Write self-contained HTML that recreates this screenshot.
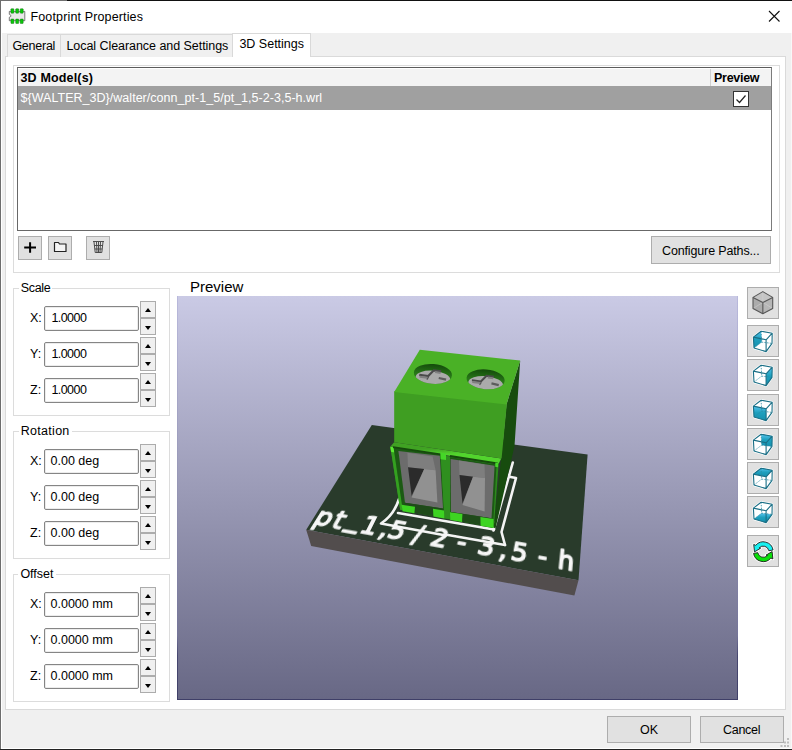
<!DOCTYPE html>
<html>
<head>
<meta charset="utf-8">
<title>Footprint Properties</title>
<style>
*{box-sizing:border-box;margin:0;padding:0}
html,body{width:792px;height:750px;overflow:hidden;background:#f0f0f0}
body{position:relative;font-family:"Liberation Sans",sans-serif;font-size:12.5px;color:#000}
.abs{position:absolute}
.t{position:absolute;white-space:nowrap;line-height:16px;height:16px}
#titlebar{left:0;top:0;width:792px;height:33px;background:#fff;border-top:1px solid #111}
#leftedge{left:0;top:0;width:1px;height:750px;background:#6d6d6d}
#bottomedge{left:0;top:749px;width:792px;height:1px;background:#222}
.tab{position:absolute;top:34.4px;height:22.6px;background:#f0f0f0;border:1px solid #d9d9d9;border-bottom:none}
.tabsel{position:absolute;top:33px;height:24px;background:#fff;border:1px solid #d9d9d9;border-bottom:none}
#panel{left:5px;top:56px;width:781px;height:654px;background:#fff;border:1px solid #dadada}
.grp{position:absolute;border:1px solid #dcdcdc;background:#fff}
.btn{position:absolute;background:#e1e1e1;border:1px solid #adadad}
.inp{position:absolute;width:95px;height:25px;background:#fff;border:1px solid #858585;border-radius:2px;box-shadow:inset 0 0 0 1px #ececec}
.spin{position:absolute;width:16px;height:17.3px;background:#f0f0f0;border:1px solid #acacac}
.spin i{position:absolute;left:4px;width:0;height:0;border-left:3.5px solid transparent;border-right:3.5px solid transparent}
.spin.up i{top:5.7px;border-bottom:4px solid #000}
.spin.dn i{top:6.5px;border-top:4px solid #000}
.vb{position:absolute;left:747px;width:32px;height:32px;background:#e1e1e1;border:1px solid #adadad}
</style>
</head>
<body>
<div id="titlebar" class="abs"></div>
<div class="abs" style="left:0;top:0;width:67px;height:1px;background:#707070"></div>
<!-- window icon -->
<svg class="abs" style="left:6px;top:4px" width="24" height="24" viewBox="0 0 24 24">
<path d="M3.3 7.4h15.5v9.3h-15.5v-3.4l1.5-0.9v-1.2l-1.5-0.9z" fill="#e9e9e9" stroke="#4a4a4a" stroke-width="0.7" stroke-linejoin="round"/>
<g fill="#0ac80a" stroke="#0a5a0a" stroke-width="0.4">
<rect x="4.9" y="4.7" width="3" height="4.5" rx="0.6"/><rect x="9.7" y="4.7" width="3" height="4.5" rx="0.6"/><rect x="14.2" y="4.7" width="3" height="4.5" rx="0.6"/>
<rect x="4.9" y="15" width="3" height="4.5" rx="0.6"/><rect x="9.7" y="15" width="3" height="4.5" rx="0.6"/><rect x="14.2" y="15" width="3" height="4.5" rx="0.6"/>
</g></svg>
<div class="t" id="tx_title" style="letter-spacing:0.14px;left:30.5px;top:9px">Footprint Properties</div>
<svg class="abs" style="left:768px;top:10px" width="13" height="13" viewBox="0 0 13 13"><path d="M1 1L11.5 11.5M11.5 1L1 11.5" stroke="#111" stroke-width="1.1" fill="none"/></svg>

<div id="panel" class="abs"></div>
<div class="tab" style="left:7px;width:54px"></div>
<div class="tab" style="left:60px;width:173px"></div>
<div class="tabsel" style="left:232px;width:79px"></div>
<div class="t" id="tx_general" style="letter-spacing:-0.25px;left:12.4px;top:38px">General</div>
<div class="t" id="tx_local" style="letter-spacing:-0.05px;left:66.4px;top:38px">Local Clearance and Settings</div>
<div class="t" id="tx_3dset" style="left:239.4px;top:36px">3D Settings</div>

<!-- models group -->
<div class="grp" style="left:13px;top:65px;width:767px;height:208px"></div>
<div class="abs" id="list" style="left:17px;top:67.3px;width:755.4px;height:163.7px;background:#fff;border:1px solid #686868;border-top:1.7px solid #5c5c5c;border-right:1.8px solid #7c7c7c"></div>
<div class="abs" style="left:18px;top:69px;width:752.5px;height:17px;background:#f3f3f3"></div>
<div class="abs" style="left:710px;top:69px;width:1px;height:17px;background:#d0d0d0"></div>
<div class="abs" style="left:18px;top:86px;width:752.5px;height:23.5px;background:#a0a0a0"></div>
<div class="t" id="tx_3dmodels" style="letter-spacing:0.16px;left:20.5px;top:69.6px;font-weight:bold">3D Model(s)</div>
<div class="t" id="tx_prevhdr" style="letter-spacing:-0.28px;left:714px;top:69.6px;font-weight:bold">Preview</div>
<div class="t" id="tx_row" style="letter-spacing:0.03px;left:20.5px;top:90px;color:#fff">${WALTER_3D}/walter/conn_pt-1_5/pt_1,5-2-3,5-h.wrl</div>
<div class="abs" style="left:733px;top:91px;width:16px;height:16px;background:#fff;border:1px solid #333"></div>
<svg class="abs" style="left:733px;top:91px" width="16" height="16" viewBox="0 0 16 16"><path d="M3.5 8.5L6.5 11.5L12.5 4.5" stroke="#222" stroke-width="1.2" fill="none"/></svg>

<div class="btn" style="left:18px;top:236px;width:24px;height:23.5px"></div>
<div class="btn" style="left:48px;top:236px;width:24px;height:23.5px"></div>
<div class="btn" style="left:86.3px;top:236px;width:24px;height:23.5px"></div>
<svg class="abs" style="left:18px;top:236px" width="25" height="24" viewBox="0 0 25 24"><path d="M12.1 6.2v10.6M6.2 11.5h11.8" stroke="#000" stroke-width="2" fill="none"/></svg>
<svg class="abs" style="left:48px;top:235.4px" width="25" height="24" viewBox="0 0 25 24"><path d="M6.5 16.5v-9h4l1 1.5h6.5v7.5z" stroke="#222" stroke-width="1.2" fill="#f4f4f4" stroke-linejoin="round"/></svg>
<svg class="abs" style="left:86px;top:235.3px" width="25" height="24" viewBox="0 0 25 24"><path d="M7 6.5h11M8 7l1.2 10.5h6.6L17 7M10.5 7l.5 10.5M12.5 7v10.5M14.5 7l-.5 10.5M8.3 10.5h8.4M8.8 14h7.4" stroke="#444" stroke-width="0.95" fill="none"/></svg>
<div class="btn" style="left:651px;top:236px;width:120px;height:28px"></div>
<div class="t" id="tx_conf" style="letter-spacing:-0.14px;left:662px;top:243px">Configure Paths...</div>

<!-- scale / rotation / offset groups -->
<div class="grp" style="left:13px;top:288px;width:157px;height:128px"></div>
<div class="grp" style="left:13px;top:431px;width:157px;height:128px"></div>
<div class="grp" style="left:13px;top:574px;width:157px;height:128px"></div>
<div class="t lbl" id="tx_scale" style="letter-spacing:-0.3px;left:18.7px;top:280px;background:#fff;padding:0 2px">Scale</div>
<div class="t lbl" id="tx_rot" style="letter-spacing:0.28px;left:18.8px;top:423px;background:#fff;padding:0 2px">Rotation</div>
<div class="t lbl" id="tx_off" style="left:18.4px;top:566px;background:#fff;padding:0 2px">Offset</div>
<div class="t ax" style="left:30px;top:310px">X:</div>
<div class="inp" style="left:44px;top:306px"></div>
<div class="t val" id="tx_v0" style="letter-spacing:-0.55px;left:51.4px;top:310px">1.0000</div>
<div class="spin up" style="left:140px;top:301px"><i></i></div>
<div class="spin dn" style="left:140px;top:318px"><i></i></div>
<div class="t ax" style="left:30px;top:346px">Y:</div>
<div class="inp" style="left:44px;top:342px"></div>
<div class="t val" id="tx_v1" style="letter-spacing:-0.55px;left:51.4px;top:346px">1.0000</div>
<div class="spin up" style="left:140px;top:337px"><i></i></div>
<div class="spin dn" style="left:140px;top:354px"><i></i></div>
<div class="t ax" style="left:30px;top:382px">Z:</div>
<div class="inp" style="left:44px;top:378px"></div>
<div class="t val" id="tx_v2" style="letter-spacing:-0.55px;left:51.4px;top:382px">1.0000</div>
<div class="spin up" style="left:140px;top:373px"><i></i></div>
<div class="spin dn" style="left:140px;top:390px"><i></i></div>
<div class="t ax" style="left:30px;top:453px">X:</div>
<div class="inp" style="left:44px;top:449px"></div>
<div class="t val" id="tx_v3" style="left:50.5px;top:453px">0.00 deg</div>
<div class="spin up" style="left:140px;top:444px"><i></i></div>
<div class="spin dn" style="left:140px;top:461px"><i></i></div>
<div class="t ax" style="left:30px;top:489px">Y:</div>
<div class="inp" style="left:44px;top:485px"></div>
<div class="t val" id="tx_v4" style="left:50.5px;top:489px">0.00 deg</div>
<div class="spin up" style="left:140px;top:480px"><i></i></div>
<div class="spin dn" style="left:140px;top:497px"><i></i></div>
<div class="t ax" style="left:30px;top:525px">Z:</div>
<div class="inp" style="left:44px;top:521px"></div>
<div class="t val" id="tx_v5" style="left:50.5px;top:525px">0.00 deg</div>
<div class="spin up" style="left:140px;top:516px"><i></i></div>
<div class="spin dn" style="left:140px;top:533px"><i></i></div>
<div class="t ax" style="left:30px;top:596px">X:</div>
<div class="inp" style="left:44px;top:592px"></div>
<div class="t val" id="tx_v6" style="left:50.5px;top:596px">0.0000 mm</div>
<div class="spin up" style="left:140px;top:587px"><i></i></div>
<div class="spin dn" style="left:140px;top:604px"><i></i></div>
<div class="t ax" style="left:30px;top:632px">Y:</div>
<div class="inp" style="left:44px;top:628px"></div>
<div class="t val" id="tx_v7" style="left:50.5px;top:632px">0.0000 mm</div>
<div class="spin up" style="left:140px;top:623px"><i></i></div>
<div class="spin dn" style="left:140px;top:640px"><i></i></div>
<div class="t ax" style="left:30px;top:668px">Z:</div>
<div class="inp" style="left:44px;top:664px"></div>
<div class="t val" id="tx_v8" style="left:50.5px;top:668px">0.0000 mm</div>
<div class="spin up" style="left:140px;top:659px"><i></i></div>
<div class="spin dn" style="left:140px;top:676px"><i></i></div>

<!-- preview -->
<div class="t" id="tx_preview" style="left:190px;top:278px;font-size:15px;line-height:18px;height:18px">Preview</div>
<div class="abs" id="canvas" style="left:177px;top:296px;width:561px;height:404px;background:linear-gradient(#cacae5,#686885);border-bottom:1px solid #3f3f68"></div>
<div class="abs" style="left:737px;top:296px;width:1px;height:404px;background:linear-gradient(#b9b9dc 0%,#9494b3 50%,#75759a 84%,#474770 89%,#3f3f68 100%)"></div>
<div class="abs" style="left:177px;top:296px;width:1px;height:404px;background:linear-gradient(#b9b9dc 0%,#9494b3 50%,#75759a 84%,#474770 89%,#3f3f68 100%)"></div>
<!--SCENE_START--><svg class="abs" style="left:177px;top:296px" width="561" height="404" viewBox="177 296 561 404">
<defs><linearGradient id="glip" x1="0" y1="0" x2="0.15" y2="1"><stop offset="0.35" stop-color="#40a223"/><stop offset="0.62" stop-color="#52d42d"/></linearGradient><linearGradient id="gfront" x1="0" y1="0" x2="0" y2="1"><stop offset="0" stop-color="#3fa424"/><stop offset="1" stop-color="#37961f"/></linearGradient></defs>
<polygon points="371.8,425.0 587.6,454.6 578.5,580.3 306.2,529.8" fill="#293b2b" />
<polygon points="306.2,529.8 578.5,580.3 574.4,595.5 311.2,546.0" fill="#524d4d" />
<path d="M512.8 462.5L493.5 530.5 M510.6 477L516 478L501.5 532L505 545" stroke-width="2.6" stroke="#f4f4f4" fill="none" stroke-linecap="round" stroke-linejoin="round"/>
<path d="M398 513L494 529.5" stroke-width="2.7" stroke="#f4f4f4" fill="none" stroke-linecap="round" stroke-linejoin="round"/>
<path d="M399 499Q394 515 381 523.5L446 535.5" stroke-width="2.6" stroke="#f4f4f4" fill="none" stroke-linecap="round" stroke-linejoin="round"/>
<path d="M505 545L448 535" stroke-width="2.5" stroke="#f4f4f4" fill="none" stroke-linecap="round" stroke-linejoin="round"/>
<polygon points="506.5,404.4 520.2,360.5 514.5,446.0 495.5,528.5 493.6,527.5 501.2,458.4" fill="#174c0e" />
<polygon points="390.4,447.0 498.6,464.5 493.8,527.8 400.2,509.8" fill="#2c8a1c" />
<polygon points="390.4,447.0 393.6,447.6 402.8,510.2 400.2,509.8" fill="#34a020" />
<polygon points="390.3,446.6 393.7,447.2 394.3,452.4 391.0,451.8" fill="#5cec32" />
<polygon points="393.6,447.6 441.0,455.0 444.5,518.0 402.8,510.2" fill="#1c5a14" />
<polygon points="449.5,457.0 496.5,464.6 493.0,527.5 449.8,519.2" fill="#1c5a14" />
<polygon points="440.6,455.0 450.0,456.6 450.2,519.3 444.4,518.2" fill="#2f8f1f" />
<polygon points="398.4,451.0 439.8,455.8 443.0,508.6 405.0,502.8" fill="#6c6c6c" />
<polygon points="450.6,459.0 494.6,465.8 491.5,518.2 451.0,512.0" fill="#6c6c6c" />
<polygon points="407.4,452.8 432.6,456.4 435.6,470.2 408.0,467.2" fill="#7e7e7e" />
<polygon points="459.0,460.5 484.5,464.5 485.0,478.0 459.5,475.0" fill="#7e7e7e" />
<polygon points="408.0,467.2 424.2,469.0 411.6,496.0" fill="#2b2b2b" />
<polygon points="459.5,475.0 473.0,476.8 462.5,503.5" fill="#2b2b2b" />
<polygon points="424.2,469.0 435.6,470.2 437.4,502.6 411.6,497.4" fill="#919191" />
<polygon points="473.0,476.8 485.0,478.0 484.6,511.5 462.5,505.0" fill="#919191" />
<polygon points="405.0,502.8 443.0,508.6 444.0,518.0 403.0,510.4" fill="#1f4a1a" />
<polygon points="451.0,512.0 491.5,518.2 493.2,527.5 450.5,519.5" fill="#1f4a1a" />
<polygon points="401.5,504.8 415.0,506.8 414.4,513.2 402.6,511.2" fill="#3dd422" />
<polygon points="433.0,508.8 444.0,510.4 444.4,518.4 433.4,516.6" fill="#3dd422" />
<polygon points="450.0,512.2 462.4,514.0 462.0,522.0 450.2,520.0" fill="#3dd422" />
<polygon points="480.4,517.0 493.6,519.0 493.4,528.0 480.6,525.8" fill="#3dd422" />
<polygon points="394.2,442.3 501.2,458.4 498.8,463.6 390.4,446.6" fill="url(#glip)" />
<path d="M393 447.2L440.6 454.4 M450 456L497.6 463.4" stroke="#154a0c" stroke-width="1.8" fill="none"/>
<polygon points="440.4,452.6 446.0,453.4 446.0,460.0 440.6,459.2" fill="#45d628" />
<polygon points="495.4,462.6 498.4,463.0 498.0,467.2 495.2,466.8" fill="#45d628" />
<polygon points="394.2,391.3 506.9,403.6 501.6,458.4 394.2,442.3" fill="#3f9e22" />
<polygon points="419.8,349.8 520.2,360.5 506.5,404.4 394.2,392.1" fill="#4ab126" />
<linearGradient id="hole" x1="0" y1="0" x2="0" y2="1"><stop offset="0" stop-color="#144a0c"/><stop offset="0.55" stop-color="#287818"/></linearGradient>
<g transform="translate(432.9 373.9) rotate(5)">
<ellipse cx="0" cy="0" rx="19.1" ry="9.9" fill="url(#hole)"/>
<clipPath id="c432"><ellipse cx="0" cy="0" rx="19.1" ry="9.9"/></clipPath>
<g clip-path="url(#c432)"><ellipse cx="0.4" cy="4.4" rx="17.4" ry="7.6" fill="#aaaaaa"/>
<path d="M-13.5 2.2L-4.5 2.6L0.6 -3.6L8 -3.2" stroke="#4a4a4a" stroke-width="2.1" fill="none"/>
<path d="M-13 3.9L-5 4.2M2 -2L7.6 -1.6" stroke="#808080" stroke-width="2" fill="none"/>
<path d="M6.2 3.6L13.6 4.6" stroke="#5c5c5c" stroke-width="2.2" fill="none"/>
<path d="M-5.5 6.2L-4 3.4" stroke="#555" stroke-width="1.2" fill="none"/>
</g></g>
<g transform="translate(485.6 379.3) rotate(5)">
<ellipse cx="0" cy="0" rx="19.1" ry="9.9" fill="url(#hole)"/>
<clipPath id="c485"><ellipse cx="0" cy="0" rx="19.1" ry="9.9"/></clipPath>
<g clip-path="url(#c485)"><ellipse cx="0.4" cy="4.4" rx="17.4" ry="7.6" fill="#aaaaaa"/>
<path d="M-13.5 2.2L-4.5 2.6L0.6 -3.6L8 -3.2" stroke="#4a4a4a" stroke-width="2.1" fill="none"/>
<path d="M-13 3.9L-5 4.2M2 -2L7.6 -1.6" stroke="#808080" stroke-width="2" fill="none"/>
<path d="M6.2 3.6L13.6 4.6" stroke="#5c5c5c" stroke-width="2.2" fill="none"/>
<path d="M-5.5 6.2L-4 3.4" stroke="#555" stroke-width="1.2" fill="none"/>
</g></g>
</svg>
<div class="abs" style="left:177px;top:296px;width:561px;height:404px;overflow:hidden;pointer-events:none"><svg id="silk" width="260" height="21" viewBox="0 0 260 21" style="position:absolute;left:0;top:0;overflow:visible;transform-origin:0 0;transform:matrix3d(0.964511,0.166125,0,-3.47885e-05,-0.832709,0.48249,0,-0.0019072,0,0,1,0,146.6,209.6,0,1)"><text x="7.5 22.8 37.5 53.5 68.5 80.8 102 123.4 145.6 170 187.2 202.9 225.8 249.1" y="20.3 20.3 15.8 20.3 20.3 20.3 20.3 20.3 20.3 20.3 20.3 20.3 20.3 20.3" text-anchor="middle" font-family="DejaVu Sans, Liberation Sans, sans-serif" font-size="25.5" fill="#f6f6f6" stroke="#f6f6f6" stroke-width="1.5" stroke-linejoin="round">pt_1,5/2-3,5-h</text></svg></div><!--SCENE_END-->
<!--VB_START--><svg width="0" height="0" style="position:absolute"><defs><linearGradient id="teal" x1="0" y1="0" x2="0" y2="1"><stop offset="0" stop-color="#58c4ee"/><stop offset="0.45" stop-color="#1ea0be"/><stop offset="1" stop-color="#1590ae"/></linearGradient></defs></svg>
<div class="vb" style="top:287px"></div>
<svg class="abs" style="left:747px;top:287px" width="32" height="32" viewBox="-0.5 -0.8 32 32"><polygon points="15.3,3.8 25.2,9.6 25.2,20.7 15.3,26.0 5.5,20.7 5.5,9.6" fill="#c4c4c4"/><polygon points="15.3,14.6 25.2,9.6 25.2,20.7 15.3,26.0" fill="#b6b6b6"/><polygon points="15.3,14.6 5.5,9.6 5.5,20.7 15.3,26.0" fill="#ababab"/><path d="M15.35 3.8V14.6M5.5 20.7L15.35 14.6L25.2 20.7" stroke="#d6d6d6" stroke-width="0.6" fill="none" opacity="0.8"/><path d="M15.35 14.6L25.2 9.6M15.35 14.6L5.5 9.6M15.35 14.6V26.0" stroke="#575757" stroke-width="1.1" fill="none"/><polygon points="15.3,3.8 25.2,9.6 25.2,20.7 15.3,26.0 5.5,20.7 5.5,9.6" fill="none" stroke="#575757" stroke-width="1.1" stroke-linejoin="round"/></svg>
<div class="vb" style="top:325px"></div>
<svg class="abs" style="left:747px;top:325px" width="32" height="32" viewBox="-0.5 -0.8 32 32"><polygon points="5.9,11.3 13.6,5.4 24.7,7.4 24.5,17.6 18.6,25.8 6.5,22.2" fill="#fff" stroke="#fff" stroke-width="2.4" stroke-linejoin="round"/><polygon points="5.9,11.3 13.6,5.4 14.2,16.3 6.5,22.2" fill="url(#teal)"/><path d="M13.6 5.4L14.2 16.3L6.5 22.2M14.2 16.3L24.5 17.6" stroke="#2a8ca3" stroke-width="0.8" stroke-dasharray="1.5 1.2" fill="none"/><path d="M5.9 11.3L13.6 5.4L24.7 7.4L18.6 14ZM5.9 11.3L6.5 22.2L18.6 25.8L18.6 14M18.6 25.8L24.5 17.6L24.7 7.4" stroke="#1a6f86" stroke-width="1.1" fill="none" stroke-linejoin="round"/></svg>
<div class="vb" style="top:359px"></div>
<svg class="abs" style="left:747px;top:359px" width="32" height="32" viewBox="-0.5 -0.8 32 32"><polygon points="5.9,11.3 13.6,5.4 24.7,7.4 24.5,17.6 18.6,25.8 6.5,22.2" fill="#fff" stroke="#fff" stroke-width="2.4" stroke-linejoin="round"/><polygon points="18.6,14.0 24.7,7.4 24.5,17.6 18.6,25.8" fill="url(#teal)"/><path d="M13.6 5.4L14.2 16.3L6.5 22.2M14.2 16.3L24.5 17.6" stroke="#2a8ca3" stroke-width="0.8" stroke-dasharray="1.5 1.2" fill="none"/><path d="M5.9 11.3L13.6 5.4L24.7 7.4L18.6 14ZM5.9 11.3L6.5 22.2L18.6 25.8L18.6 14M18.6 25.8L24.5 17.6L24.7 7.4" stroke="#1a6f86" stroke-width="1.1" fill="none" stroke-linejoin="round"/></svg>
<div class="vb" style="top:394px"></div>
<svg class="abs" style="left:747px;top:394px" width="32" height="32" viewBox="-0.5 -0.8 32 32"><polygon points="5.9,11.3 13.6,5.4 24.7,7.4 24.5,17.6 18.6,25.8 6.5,22.2" fill="#fff" stroke="#fff" stroke-width="2.4" stroke-linejoin="round"/><polygon points="5.9,11.3 18.6,14.0 18.6,25.8 6.5,22.2" fill="url(#teal)"/><path d="M13.6 5.4L14.2 16.3L6.5 22.2M14.2 16.3L24.5 17.6" stroke="#2a8ca3" stroke-width="0.8" stroke-dasharray="1.5 1.2" fill="none"/><path d="M5.9 11.3L13.6 5.4L24.7 7.4L18.6 14ZM5.9 11.3L6.5 22.2L18.6 25.8L18.6 14M18.6 25.8L24.5 17.6L24.7 7.4" stroke="#1a6f86" stroke-width="1.1" fill="none" stroke-linejoin="round"/></svg>
<div class="vb" style="top:428px"></div>
<svg class="abs" style="left:747px;top:428px" width="32" height="32" viewBox="-0.5 -0.8 32 32"><polygon points="5.9,11.3 13.6,5.4 24.7,7.4 24.5,17.6 18.6,25.8 6.5,22.2" fill="#fff" stroke="#fff" stroke-width="2.4" stroke-linejoin="round"/><polygon points="13.6,5.4 24.7,7.4 24.5,17.6 14.2,16.3" fill="url(#teal)"/><path d="M13.6 5.4L14.2 16.3L6.5 22.2M14.2 16.3L24.5 17.6" stroke="#2a8ca3" stroke-width="0.8" stroke-dasharray="1.5 1.2" fill="none"/><path d="M5.9 11.3L13.6 5.4L24.7 7.4L18.6 14ZM5.9 11.3L6.5 22.2L18.6 25.8L18.6 14M18.6 25.8L24.5 17.6L24.7 7.4" stroke="#1a6f86" stroke-width="1.1" fill="none" stroke-linejoin="round"/></svg>
<div class="vb" style="top:462px"></div>
<svg class="abs" style="left:747px;top:462px" width="32" height="32" viewBox="-0.5 -0.8 32 32"><polygon points="5.9,11.3 13.6,5.4 24.7,7.4 24.5,17.6 18.6,25.8 6.5,22.2" fill="#fff" stroke="#fff" stroke-width="2.4" stroke-linejoin="round"/><polygon points="5.9,11.3 13.6,5.4 24.7,7.4 18.6,14.0" fill="url(#teal)"/><path d="M13.6 5.4L14.2 16.3L6.5 22.2M14.2 16.3L24.5 17.6" stroke="#2a8ca3" stroke-width="0.8" stroke-dasharray="1.5 1.2" fill="none"/><path d="M5.9 11.3L13.6 5.4L24.7 7.4L18.6 14ZM5.9 11.3L6.5 22.2L18.6 25.8L18.6 14M18.6 25.8L24.5 17.6L24.7 7.4" stroke="#1a6f86" stroke-width="1.1" fill="none" stroke-linejoin="round"/></svg>
<div class="vb" style="top:496px"></div>
<svg class="abs" style="left:747px;top:496px" width="32" height="32" viewBox="-0.5 -0.8 32 32"><polygon points="5.9,11.3 13.6,5.4 24.7,7.4 24.5,17.6 18.6,25.8 6.5,22.2" fill="#fff" stroke="#fff" stroke-width="2.4" stroke-linejoin="round"/><polygon points="6.5,22.2 18.6,25.8 24.5,17.6 14.2,16.3" fill="url(#teal)"/><path d="M13.6 5.4L14.2 16.3L6.5 22.2M14.2 16.3L24.5 17.6" stroke="#2a8ca3" stroke-width="0.8" stroke-dasharray="1.5 1.2" fill="none"/><path d="M5.9 11.3L13.6 5.4L24.7 7.4L18.6 14ZM5.9 11.3L6.5 22.2L18.6 25.8L18.6 14M18.6 25.8L24.5 17.6L24.7 7.4" stroke="#1a6f86" stroke-width="1.1" fill="none" stroke-linejoin="round"/></svg>
<div class="vb" style="top:535px"></div>
<svg class="abs" style="left:747px;top:535px" width="32" height="32" viewBox="-0.5 -0.8 32 32"><g transform="translate(15.8 15.9)"><path d="M9.75 -1.72A9.9 9.9 0 0 0 -7.58 -6.36L-9.58 -7.22L-8.80 0.15L-2.71 -3.47L-4.16 -3.75A5.6 5.6 0 0 1 5.51 -0.97Z" fill="none" stroke="#fff" stroke-width="2.6" stroke-linejoin="round"/><path d="M9.75 -1.72A9.9 9.9 0 0 0 -7.58 -6.36L-9.58 -7.22L-8.80 0.15L-2.71 -3.47L-4.16 -3.75A5.6 5.6 0 0 1 5.51 -0.97Z" transform="rotate(180)" fill="none" stroke="#fff" stroke-width="2.6" stroke-linejoin="round"/><path d="M9.75 -1.72A9.9 9.9 0 0 0 -7.58 -6.36L-9.58 -7.22L-8.80 0.15L-2.71 -3.47L-4.16 -3.75A5.6 5.6 0 0 1 5.51 -0.97Z" fill="#19f0f0" stroke="#1c1c1c" stroke-width="0.9" stroke-linejoin="round"/><path d="M9.75 -1.72A9.9 9.9 0 0 0 -7.58 -6.36L-9.58 -7.22L-8.80 0.15L-2.71 -3.47L-4.16 -3.75A5.6 5.6 0 0 1 5.51 -0.97Z" transform="rotate(180)" fill="#0ae00a" stroke="#1c1c1c" stroke-width="0.9" stroke-linejoin="round"/></g></svg><!--VB_END-->

<!-- bottom buttons -->
<div class="btn" style="left:607px;top:716px;width:84px;height:27px"></div>
<div class="btn" style="left:700px;top:716px;width:84px;height:27px"></div>
<div class="t" id="tx_ok" style="left:640px;top:722px">OK</div>
<div class="t" id="tx_cancel" style="letter-spacing:-0.3px;left:723px;top:722px">Cancel</div>
<svg class="abs" style="left:778px;top:736px" width="13" height="13" viewBox="0 0 13 13"><g fill="#bdbdbd"><rect x="9" y="2" width="2" height="2"/><rect x="6" y="5.5" width="2" height="2"/><rect x="9" y="5.5" width="2" height="2"/><rect x="2.5" y="9" width="2" height="2"/><rect x="6" y="9" width="2" height="2"/><rect x="9" y="9" width="2" height="2"/></g></svg>
<div class="abs" style="left:1px;top:33px;width:1.4px;height:716px;background:#fff"></div>
<div class="abs" style="left:1px;top:747.6px;width:790px;height:1.4px;background:#fff"></div>
<div class="abs" style="left:790.7px;top:33px;width:1.3px;height:716px;background:#f8f8f8"></div>
<div id="leftedge" class="abs"></div>
<div id="bottomedge" class="abs"></div>
</body>
</html>
